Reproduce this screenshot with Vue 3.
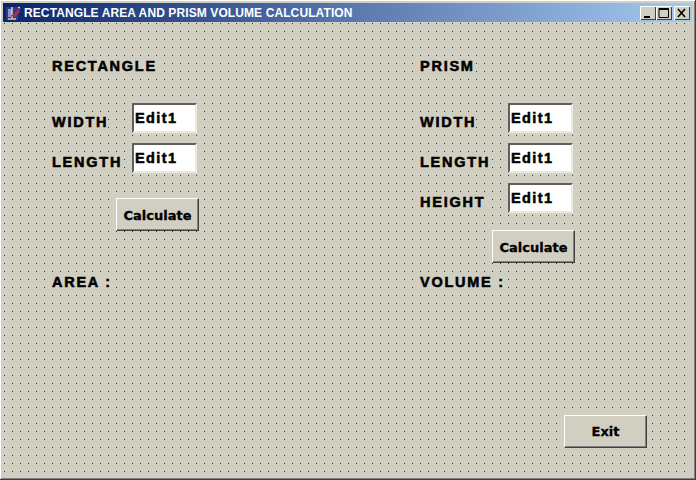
<script setup>
const left = [{ l: 'WIDTH' }, { l: 'LENGTH' }]
const right = [{ l: 'WIDTH' }, { l: 'LENGTH' }, { l: 'HEIGHT' }]
</script>

<template>
  <div class="window">
    <div class="titlebar">
      <svg class="appicon" width="16" height="16" viewBox="0 0 16 16">
        <rect x="1" y="2" width="12" height="13" fill="#2f3a8c" />
        <rect x="3" y="4" width="4" height="8" fill="#8f93c8" />
        <path d="M7 2v11M3 14h8" stroke="#d8c8a8" stroke-width="1.6" fill="none" />
        <path d="M6 11c3 0 6-4 9-8M9 12l6-6" stroke="#b02a58" stroke-width="1.5" fill="none" />
        <path d="M13 2l2 1" stroke="#f0e0e8" stroke-width="1.2" fill="none" />
      </svg>
      <span class="title">RECTANGLE AREA AND PRISM VOLUME CALCULATION</span>
      <div class="controls">
        <div class="ctl"><svg width="16" height="14" viewBox="0 0 16 14"><rect x="4" y="10" width="6" height="2" fill="#000" /></svg></div>
        <div class="ctl"><svg width="16" height="14" viewBox="0 0 16 14"><path d="M3 2.5h9.5v9h-9.5z M3 3.5h9.5" fill="none" stroke="#000" /></svg></div>
        <div class="ctl close"><svg width="16" height="14" viewBox="0 0 16 14"><path d="M4 3l7 8M11 3l-7 8" stroke="#000" stroke-width="1.6" fill="none" /></svg></div>
      </div>
    </div>
    <div class="client">
      <div class="columns">
        <section class="col col-left">
          <div class="heading"><span>RECTANGLE</span></div>
          <div class="rows">
            <div v-for="r in left" :key="r.l" class="row">
              <div class="label"><span>{{ r.l }}</span></div>
              <div class="edit">Edit1</div>
            </div>
          </div>
          <div class="btn calc">Calculate</div>
          <div class="result"><span>AREA :</span></div>
        </section>
        <section class="col col-right">
          <div class="heading"><span>PRISM</span></div>
          <div class="rows">
            <div v-for="r in right" :key="r.l" class="row">
              <div class="label"><span>{{ r.l }}</span></div>
              <div class="edit">Edit1</div>
            </div>
          </div>
          <div class="btn calc">Calculate</div>
          <div class="result"><span>VOLUME :</span></div>
        </section>
      </div>
      <div class="footer"><div class="btn">Exit</div></div>
    </div>
  </div>
</template>

<style>
html, body { margin: 0; padding: 0; background: #d1cfc2; }
</style>

<style scoped>
.window {
  width: 696px;
  height: 480px;
  box-sizing: border-box;
  padding: 3px;
  display: flex;
  flex-direction: column;
  background: #d1cfc2;
  border-right: 1px solid #404040;
  border-bottom: 1px solid #404040;
  box-shadow: inset 1px 1px 0 #fff, inset -1px -1px 0 #808080;
  font-family: "Liberation Sans", sans-serif;
}
.titlebar {
  height: 19px;
  flex: none;
  display: flex;
  align-items: center;
  padding: 0 2px 0 2px;
  background: linear-gradient(90deg, #0a246a, #a6caf0);
  color: #fff;
}
.appicon { flex: none; margin-right: 3px; }
.title {
  font: bold 12px "Liberation Sans", sans-serif;
  letter-spacing: 0.1px;
  white-space: nowrap;
}
.controls { margin-left: auto; display: flex; }
.ctl {
  width: 16px;
  height: 14px;
  background: #d1cfc2;
  box-shadow: inset 1px 1px 0 #fff, inset -1px -1px 0 #404040;
}
.ctl svg { display: block; }
.close { margin-left: 2px; }
.client {
  flex: 1;
  background-color: #d1cfc2;
  background-image: radial-gradient(circle at 1.5px 1.5px, #3a3a3a 0.75px, transparent 0.8px);
  background-size: 8px 8px;
  display: flex;
  flex-direction: column;
}
.columns { display: flex; padding: 37px 0 0 49px; }
.col { display: flex; flex-direction: column; }
.col-left { width: 368px; }
.col-right { width: 160px; }
.heading, .label, .result {
  font-weight: bold;
  font-size: 14.5px;
  line-height: 14px;
  letter-spacing: 1.75px;
  -webkit-text-stroke: 0.55px #000;
  color: #000;
  white-space: nowrap;
}
.heading span, .label span, .result span {
  display: inline-block;
  background: #d1cfc2;
  padding: 2px 0 3px 0;
  margin: -2px 0 -3px;
}
.rows {
  margin-top: 30px;
  display: flex;
  flex-direction: column;
  gap: 10px;
}
.row { display: flex; align-items: flex-start; height: 30px; }
.label { width: 80px; padding-top: 12px; }
.col-right .label { width: 88px; }
.edit {
  width: 65px;
  height: 30px;
  box-sizing: border-box;
  padding: 5px 0 0 1px;
  background: #fff;
  font-weight: bold;
  font-size: 14.5px;
  line-height: 17px;
  letter-spacing: 1.4px;
  -webkit-text-stroke: 0.5px #000;
  color: #000;
  border: 2px solid;
  border-color: #5f5f58 #ece9e0 #ece9e0 #5f5f58;
}
.btn {
  width: 83px;
  height: 33px;
  box-sizing: border-box;
  display: flex;
  align-items: center;
  justify-content: center;
  background: #d1cfc2;
  font-family: "DejaVu Sans", sans-serif;
  font-weight: bold;
  font-size: 13px;
  -webkit-text-stroke: 0.3px #000;
  color: #000;
  border: 1px solid;
  border-color: #fff #404040 #404040 #fff;
  box-shadow: inset -1px -1px 0 #808080;
}
.calc { margin-top: 25px; margin-left: 64px; padding-top: 1px; }
.col-right .calc { margin-top: 17px; margin-left: 72px; }
.result { margin-top: 44px; }
.col-right .result { margin-top: 12px; }
.footer { display: flex; justify-content: flex-end; padding: 126px 45px 0 0; }
</style>
